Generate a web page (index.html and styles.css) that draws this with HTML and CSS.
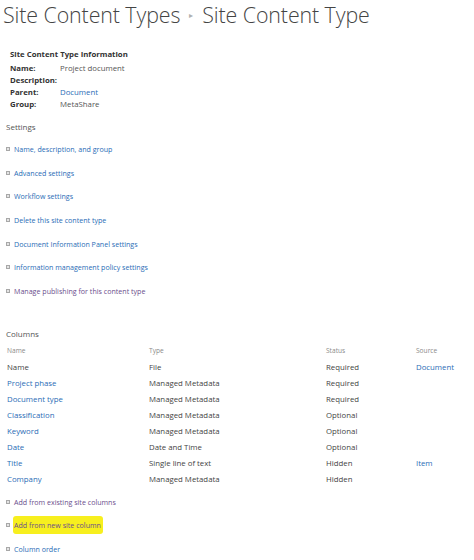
FILE: index.html
```html
<!DOCTYPE html>
<html>
<head>
<meta charset="utf-8">
<link rel="stylesheet" href="styles.css">
</head>
<body>
<div class="page">
  <h1 class="title"><span>Site Content Types</span><span class="chev">&#9656;</span><span>Site Content Type</span></h1>

  <div class="info">
    <div class="info-head">Site Content Type Information</div>
    <div class="info-grid">
      <div class="lbl">Name:</div><div class="val">Project document</div>
      <div class="lbl">Description:</div><div class="val"></div>
      <div class="lbl">Parent:</div><div class="val"><a class="lnk">Document</a></div>
      <div class="lbl">Group:</div><div class="val">MetaShare</div>
    </div>
  </div>

  <div class="section-title settings-title">Settings</div>
  <ul class="links settings-links">
    <li><a class="lnk">Name, description, and group</a></li>
    <li><a class="lnk">Advanced settings</a></li>
    <li><a class="lnk">Workflow settings</a></li>
    <li><a class="lnk">Delete this site content type</a></li>
    <li><a class="lnk">Document Information Panel settings</a></li>
    <li><a class="lnk">Information management policy settings</a></li>
    <li><a class="lnk visited">Manage publishing for this content type</a></li>
  </ul>

  <div class="section-title columns-title">Columns</div>
  <div class="cols">
    <div class="hd">Name</div><div class="hd">Type</div><div class="hd">Status</div><div class="hd">Source</div>
    <div>Name</div><div>File</div><div>Required</div><div><a class="lnk">Document</a></div>
    <div><a class="lnk">Project phase</a></div><div>Managed Metadata</div><div>Required</div><div></div>
    <div><a class="lnk">Document type</a></div><div>Managed Metadata</div><div>Required</div><div></div>
    <div><a class="lnk">Classification</a></div><div>Managed Metadata</div><div>Optional</div><div></div>
    <div><a class="lnk">Keyword</a></div><div>Managed Metadata</div><div>Optional</div><div></div>
    <div><a class="lnk">Date</a></div><div>Date and Time</div><div>Optional</div><div></div>
    <div><a class="lnk">Title</a></div><div>Single line of text</div><div>Hidden</div><div><a class="lnk">Item</a></div>
    <div><a class="lnk">Company</a></div><div>Managed Metadata</div><div>Hidden</div><div></div>
  </div>

  <ul class="links col-links">
    <li><a class="lnk visited">Add from existing site columns</a></li>
    <li><a class="lnk visited hl">Add from new site column</a></li>
    <li><a class="lnk">Column order</a></li>
  </ul>
</div>
</body>
</html>
```

FILE: styles.css
```css
html, body {
  margin: 0;
  padding: 0;
  background: #ffffff;
}

body {
  font-family: "Open Sans", "Noto Sans", "Liberation Sans", sans-serif;
  color: #444444;
  font-size: 7.8px;
}

.title {
  margin: 0;
  padding: 0 0 0 3px;
  font-size: 21.4px;
  font-weight: 300;
  color: #444444;
  line-height: 28px;
  height: 30px;
  display: flex;
  align-items: center;
  gap: 9px;
  letter-spacing: -0.1px;
}

.title .chev {
  font-size: 8px;
  color: #b0b0b0;
  font-weight: 400;
}

.info {
  padding: 16px 0 0 10px;
}

.info-head {
  font-weight: 700;
  color: #333333;
  line-height: 16px;
}

.info-grid {
  display: grid;
  grid-template-columns: 50px auto;
  grid-auto-rows: 12px;
  line-height: 12px;
}

.info-grid .lbl {
  font-weight: 700;
  color: #333333;
}

.info-grid .val {
  color: #555555;
}

.lnk {
  color: #2a6cb6;
  text-decoration: none;
}

.lnk.visited {
  color: #6a4d8c;
}

.hl {
  background: #f7ef1e;
  padding: 3px 2px 3px 1px;
  margin-left: -1px;
  border-radius: 3px;
}

.section-title {
  padding-left: 6px;
  color: #555555;
  line-height: 12px;
  font-size: 8px;
}

.settings-title {
  margin-top: 11px;
}

.links {
  list-style: none;
  margin: 0;
  padding: 0 0 0 6px;
  font-size: 7.1px;
}

.links li {
  display: flex;
  align-items: center;
  height: 23.7px;
  line-height: 12px;
}

.links li::before {
  content: "";
  width: 2px;
  height: 2px;
  border: 0.5px solid #a8a8a8;
  background: #e4e4e4;
  margin-right: 4px;
  flex: none;
}

.settings-links {
  margin-top: 4px;
}

.columns-title {
  margin-top: 25px;
}

.cols {
  display: grid;
  grid-template-columns: 142px 177px 90px auto;
  padding-left: 7px;
  margin-top: 3px;
  grid-auto-rows: 16px;
  align-items: center;
}

.cols .hd {
  color: #8a8a8a;
  font-size: 6.6px;
}

.col-links {
  margin-top: 3px;
}

.col-links li {
  height: 23.5px;
}
```
